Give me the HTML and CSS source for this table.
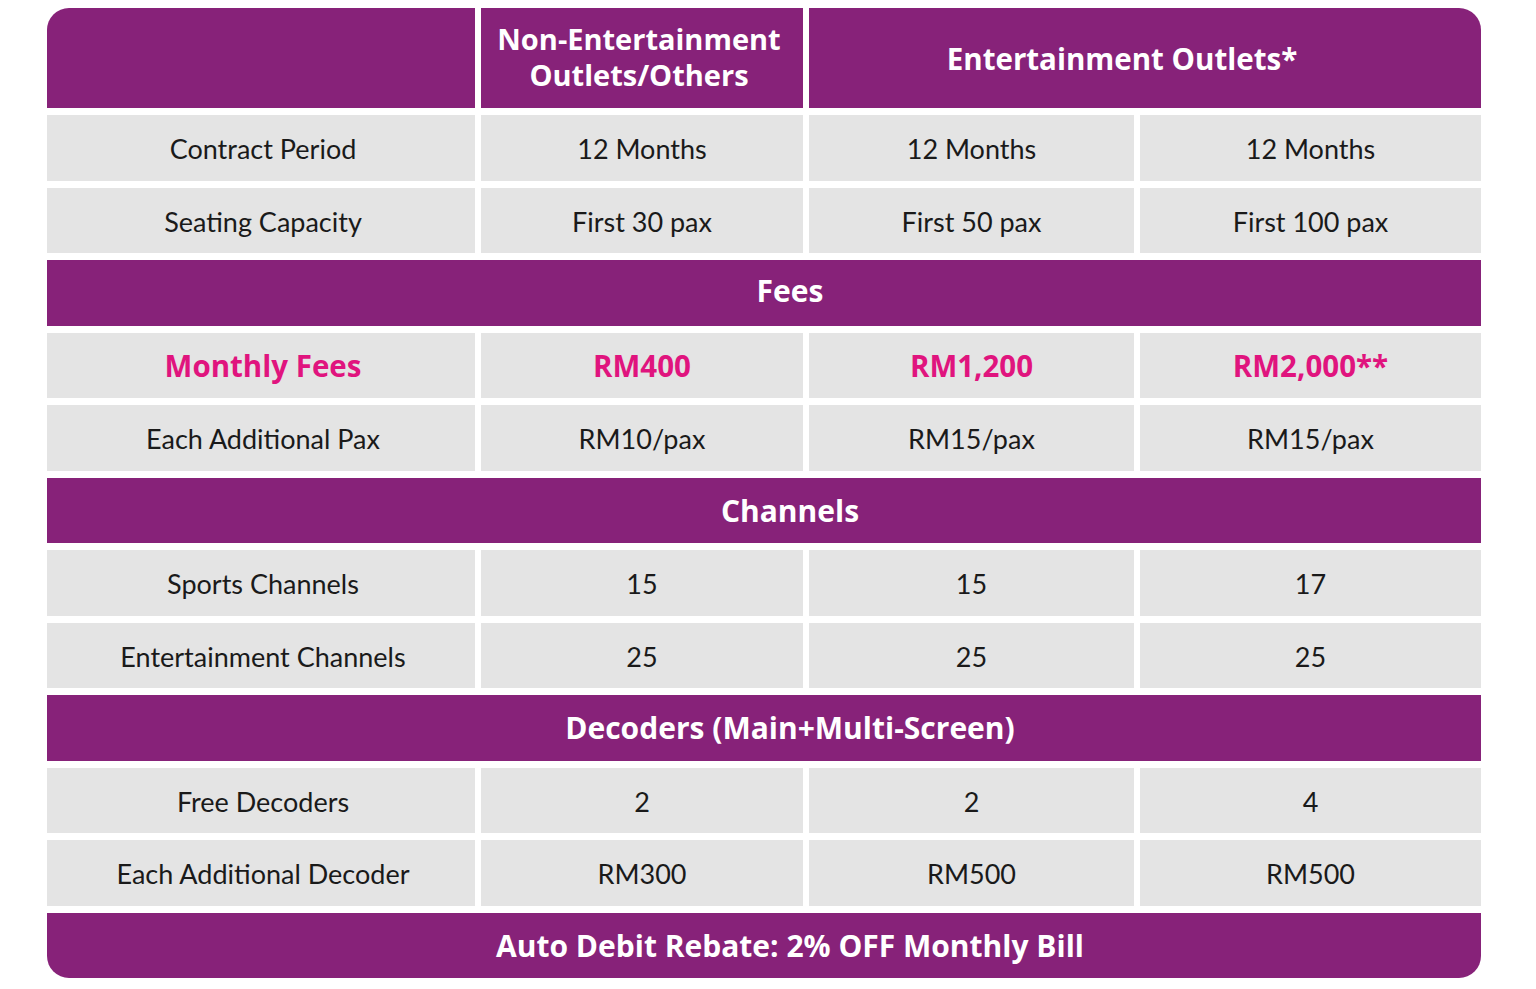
FILE: index.html
```html
<!DOCTYPE html>
<html>
<head>
<meta charset="utf-8">
<link rel="stylesheet" href="styles.css">
</head>
<body>
<div class="page">
  <div class="table">
    <div class="hd hd-first"></div>
    <div class="hd hd-mid"><span class="ln">Non-Entertainment</span><span class="ln">Outlets/Others</span></div>
    <div class="hd hd-last span2">Entertainment Outlets*</div>

    <div class="cell lead">Contract Period</div>
    <div class="cell">12 Months</div>
    <div class="cell">12 Months</div>
    <div class="cell">12 Months</div>

    <div class="cell lead">Seating Capacity</div>
    <div class="cell">First 30 pax</div>
    <div class="cell">First 50 pax</div>
    <div class="cell">First 100 pax</div>

    <div class="sec sec-fees">Fees</div>

    <div class="cell lead pink">Monthly Fees</div>
    <div class="cell pink">RM400</div>
    <div class="cell pink">RM1,200</div>
    <div class="cell pink">RM2,000**</div>

    <div class="cell lead">Each Additional Pax</div>
    <div class="cell">RM10/pax</div>
    <div class="cell">RM15/pax</div>
    <div class="cell">RM15/pax</div>

    <div class="sec">Channels</div>

    <div class="cell lead">Sports Channels</div>
    <div class="cell">15</div>
    <div class="cell">15</div>
    <div class="cell">17</div>

    <div class="cell lead">Entertainment Channels</div>
    <div class="cell">25</div>
    <div class="cell">25</div>
    <div class="cell">25</div>

    <div class="sec">Decoders (Main+Multi-Screen)</div>

    <div class="cell lead">Free Decoders</div>
    <div class="cell">2</div>
    <div class="cell">2</div>
    <div class="cell">4</div>

    <div class="cell lead">Each Additional Decoder</div>
    <div class="cell">RM300</div>
    <div class="cell">RM500</div>
    <div class="cell">RM500</div>

    <div class="sec sec-last">Auto Debit Rebate: 2% OFF Monthly Bill</div>
  </div>
</div>
</body>
</html>
```

FILE: styles.css
```css
html, body {
  margin: 0;
  padding: 0;
  background: #ffffff;
}
.page {
  padding: 8px 0 0 47px;
}
.table {
  display: grid;
  grid-template-columns: 428px 322px 325px 341px;
  grid-template-rows: 100px repeat(12, 65.5px);
  column-gap: 6px;
  row-gap: 7px;
  width: 1434px;
  font-family: Lato, "Noto Sans", sans-serif;
}
.hd {
  background: #872279;
  color: #ffffff;
  font-family: "Open Sans", "Noto Sans", sans-serif;
  font-weight: 700;
  font-size: 29.5px;
  display: flex;
  flex-direction: column;
  align-items: center;
  justify-content: center;
  text-align: center;
}
.ln {
  display: block;
  font-size: 29px;
  line-height: 36px;
}
.hd-first {
  border-top-left-radius: 22px;
}
.hd-mid {
  padding-right: 6px;
  padding-bottom: 3px;
}
.hd-last {
  border-top-right-radius: 22px;
  padding-right: 46px;
}
.span2 {
  grid-column: span 2;
}
.cell {
  background: #e4e4e4;
  color: #1a1a1a;
  font-size: 27px;
  display: flex;
  align-items: center;
  justify-content: center;
  padding-top: 2px;
}
.lead {
  padding-left: 4px;
}
.pink {
  color: #e0147e;
  font-family: "Open Sans", "Noto Sans", sans-serif;
  font-weight: 700;
  font-size: 29.5px;
  padding-top: 0;
}
.sec {
  grid-column: 1 / -1;
  background: #872279;
  color: #ffffff;
  font-family: "Open Sans", "Noto Sans", sans-serif;
  font-weight: 700;
  font-size: 30px;
  display: flex;
  align-items: center;
  justify-content: center;
  padding-left: 52px;
}
.sec-fees {
  padding-bottom: 4px;
}
.sec-last {
  border-bottom-left-radius: 22px;
  border-bottom-right-radius: 22px;
}
```
